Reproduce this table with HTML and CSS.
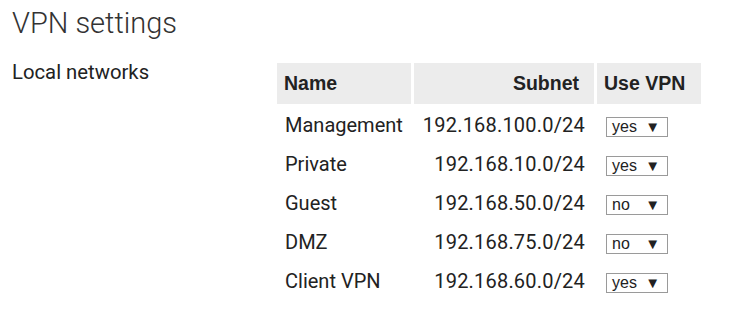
FILE: index.html
```html
<!DOCTYPE html>
<html>
<head>
<meta charset="utf-8">
<link rel="stylesheet" href="styles.css">
</head>
<body>
<h1 class="title">VPN settings</h1>
<div class="section">
  <div class="label">Local networks</div>
  <table class="nets">
    <thead>
      <tr><th class="c-name">Name</th><th class="c-subnet">Subnet</th><th class="c-vpn">Use VPN</th></tr>
    </thead>
    <tbody>
      <tr><td class="c-name">Management</td><td class="c-subnet">192.168.100.0/24</td><td class="c-vpn"><span class="sel"><span>yes</span><span class="arr">▼</span></span></td></tr>
      <tr><td class="c-name">Private</td><td class="c-subnet">192.168.10.0/24</td><td class="c-vpn"><span class="sel"><span>yes</span><span class="arr">▼</span></span></td></tr>
      <tr><td class="c-name">Guest</td><td class="c-subnet">192.168.50.0/24</td><td class="c-vpn"><span class="sel"><span>no</span><span class="arr">▼</span></span></td></tr>
      <tr><td class="c-name">DMZ</td><td class="c-subnet">192.168.75.0/24</td><td class="c-vpn"><span class="sel"><span>no</span><span class="arr">▼</span></span></td></tr>
      <tr><td class="c-name">Client VPN</td><td class="c-subnet">192.168.60.0/24</td><td class="c-vpn"><span class="sel"><span>yes</span><span class="arr">▼</span></span></td></tr>
    </tbody>
  </table>
</div>
</body>
</html>
```
FILE: styles.css
```css
html, body { margin: 0; background: #fff; }
body {
  padding: 0 12px;
  font-family: Roboto, "Liberation Sans", sans-serif;
  color: #222;
}
.title {
  margin: 0;
  font-size: 29px;
  font-weight: 300;
  line-height: 46px;
  color: #333;
}
.section {
  display: flex;
  align-items: flex-start;
  margin-top: 10px;
}
.label {
  width: 262px;
  flex: none;
  font-size: 20.3px;
  line-height: 26px;
  margin-top: 3px;
  color: #222;
}
.nets {
  table-layout: fixed;
  width: 430px;
  border-collapse: separate;
  border-spacing: 3px;
  margin-top: 4px;
}
.nets th {
  background: #ececec;
  height: 41px;
  padding: 0 8px 0 7px;
  font-family: "Liberation Sans", Arial, sans-serif;
  font-weight: bold;
  font-size: 19.5px;
  color: #222;
  text-align: left;
  box-sizing: border-box;
  white-space: nowrap;
}
.nets th.c-subnet { text-align: right; padding-right: 15px; }
.nets td {
  height: 36px;
  padding: 0 7px 0 8px;
  font-size: 20px;
  color: #222;
  box-sizing: border-box;
  white-space: nowrap;
}
.c-name { width: 134px; }
.c-subnet { width: 180px; text-align: right; }
.nets td.c-subnet { padding-right: 9px; letter-spacing: 0.2px; }
.c-vpn { width: 104px; }
.nets td.c-vpn { padding-left: 9px; }
.sel {
  display: inline-flex;
  align-items: center;
  justify-content: space-between;
  width: 62px;
  height: 20px;
  box-sizing: border-box;
  border: 1px solid #9a9a9a;
  padding: 0 7px 0 5px;
  font-family: "Liberation Sans", Arial, sans-serif;
  font-size: 16px;
  letter-spacing: 0;
  color: #222;
  vertical-align: middle;
}
.arr { font-size: 15px; }
```
